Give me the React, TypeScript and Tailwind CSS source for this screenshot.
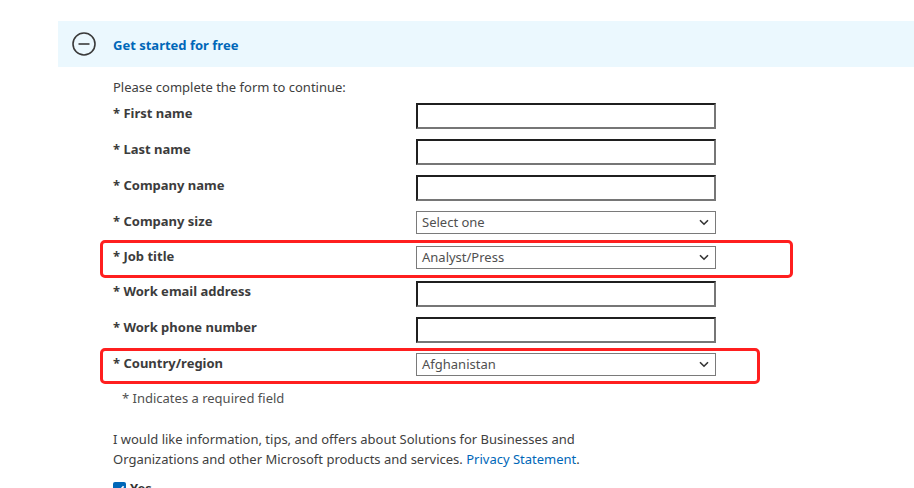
import React from "react";

const font = { fontFamily: '"Segoe UI", "Noto Sans", "Open Sans", sans-serif' };

function TextInput() {
  return (
    <div className="w-[300px] h-[26px] border-2 border-t-[#1f1f1f] border-l-[#1f1f1f] border-b-[#767676] border-r-[#767676] bg-white" />
  );
}

function SelectBox({ value }: { value: string }) {
  return (
    <div className="w-[300px] h-[23px] border border-[#7a7a7a] bg-white flex items-center justify-between pl-[5px] pr-[6px]">
      <span className="text-[13px] text-[#505050] leading-none">{value}</span>
      <svg width="10" height="7" viewBox="0 0 10 7" fill="none">
        <path d="M1 1.2 L5 5.2 L9 1.2" stroke="#333" strokeWidth="1.6" />
      </svg>
    </div>
  );
}

type Row = { label: string; kind: "input" | "select"; value?: string; h: string; box?: "job" | "country" };

const rows: Row[] = [
  { label: "First name", kind: "input", h: "h-[36px]" },
  { label: "Last name", kind: "input", h: "h-[36px]" },
  { label: "Company name", kind: "input", h: "h-[36px]" },
  { label: "Company size", kind: "select", value: "Select one", h: "h-[35px]" },
  { label: "Job title", kind: "select", value: "Analyst/Press", h: "h-[35px]", box: "job" },
  { label: "Work email address", kind: "input", h: "h-[36px]" },
  { label: "Work phone number", kind: "input", h: "h-[36px]" },
  { label: "Country/region", kind: "select", value: "Afghanistan", h: "h-[38px]", box: "country" },
];

export default function App() {
  return (
    <div className="w-[914px] h-[488px] overflow-hidden bg-white" style={font}>
      <div className="pt-[21px] pl-[58px]">
        <div className="h-[46px] bg-[#ebf8fe] flex items-center pl-[14px]">
          <svg width="26" height="26" viewBox="0 0 26 26" fill="none" className="mt-[1px]">
            <circle cx="12" cy="12" r="11" stroke="#3a3a3a" strokeWidth="1.6" />
            <path d="M6.5 12 H17.5" stroke="#3a3a3a" strokeWidth="1.6" />
          </svg>
          <span className="ml-[15px] text-[13px] font-bold text-[#0067b8] mt-[4px]">Get started for free</span>
        </div>
        <div className="pl-[55px] text-[#404040]">
          <p className="mt-[11px] text-[13px] leading-[18px]">Please complete the form to continue:</p>
          <div className="mt-[7px]">
            {rows.map((r) => (
              <div key={r.label} className={`relative flex items-start ${r.h}`}>
                <div className="w-[303px] pt-[1px] text-[13px] leading-[18px] font-bold text-[#3c3c3c]">* {r.label}</div>
                {r.kind === "input" ? <TextInput /> : <SelectBox value={r.value ?? ""} />}
                {r.box === "job" && (
                  <div className="absolute left-[-13px] top-[-6px] w-[693px] h-[38px] border-[3px] border-[#ff1f1f] rounded-[5px] pointer-events-none" />
                )}
                {r.box === "country" && (
                  <div className="absolute left-[-13px] top-[-5px] w-[660px] h-[36px] border-[3px] border-[#ff1f1f] rounded-[5px] pointer-events-none" />
                )}
              </div>
            ))}
          </div>
          <p className="pl-[9px] -mt-[2px] text-[13px] leading-[18px] text-[#505050]">* Indicates a required field</p>
          <p className="mt-[22px] text-[13px] leading-[20px] text-[#404040] w-[480px]">
            I would like information, tips, and offers about Solutions for Businesses and Organizations and other Microsoft products and services.{" "}
            <span className="text-[#0067b8]">Privacy Statement</span>.
          </p>
          <div className="mt-[10px] flex items-center gap-[4px]">
            <div className="w-[13px] h-[13px] rounded-[2px] bg-[#0067b8] flex items-center justify-center">
              <svg width="10" height="10" viewBox="0 0 10 10" fill="none">
                <path d="M1.5 5.2 L4 7.6 L8.6 2.2" stroke="#fff" strokeWidth="1.7" />
              </svg>
            </div>
            <span className="text-[13px] font-bold text-[#333]">Yes</span>
          </div>
        </div>
      </div>
    </div>
  );
}
